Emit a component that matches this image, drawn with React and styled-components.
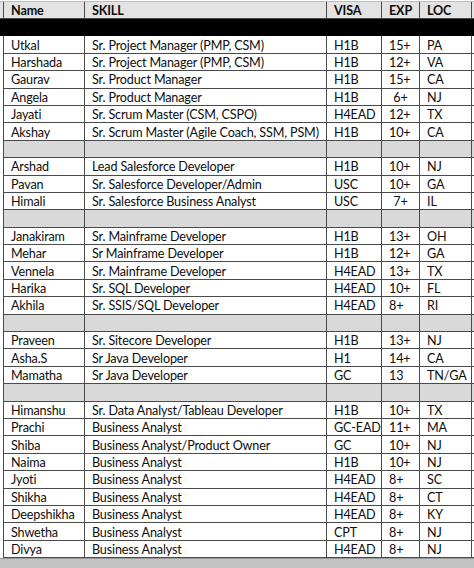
import styled, { createGlobalStyle } from 'styled-components';

const GlobalStyle = createGlobalStyle`
  html, body {
    margin: 0;
    padding: 0;
    background: #fff;
  }
  * {
    box-sizing: border-box;
  }
`;

const LINE = '#4a4a4a';
const COLS = '81px 242px 55px 38px 53px';

const Sheet = styled.div`
  width: 474px;
  height: 568px;
  padding-top: 1px;
  display: flex;
  flex-direction: column;
  font-family: Lato, 'Liberation Sans', sans-serif;
  font-size: 12.6px;
  letter-spacing: -0.15px;
  color: #0d0d0d;
  background: #fff;
  overflow: hidden;
`;

const HeaderBand = styled.div`
  background: #e3e3e3;
  border-top: 1px solid #bdbdbd;
  border-bottom: 1px solid ${LINE};
  padding-left: 3px;
`;

const Row = styled.div`
  display: grid;
  grid-template-columns: ${COLS};
  height: ${(p) => p.$h || 17.4}px;
  margin-left: ${(p) => (p.$bleed ? 0 : 3)}px;
  border-bottom: ${(p) => (p.$open ? 'none' : `1px solid ${LINE}`)};
  background: ${(p) => p.$bg || 'transparent'};
`;

const Cell = styled.div`
  display: flex;
  align-items: center;
  justify-content: ${(p) => (p.$center ? 'center' : 'flex-start')};
  padding: 1px ${(p) => (p.$center ? 0 : 2)}px 0 ${(p) => (p.$center ? 0 : 7)}px;
  border-left: 1px solid ${LINE};
  white-space: nowrap;
  overflow: hidden;
  font-weight: ${(p) => (p.$bold ? 700 : 400)};
  &:last-child {
    border-right: 1px solid ${LINE};
  }
`;

const BlackBand = styled.div`
  height: 17px;
  background: #000;
`;

const BottomBand = styled.div`
  flex: 1;
  background: #c2c2c2;
  border-top: 1px solid #9a9a9a;
`;

const groups = [
  [
    ['Utkal', 'Sr. Project Manager (PMP, CSM)', 'H1B', '15+', 'PA'],
    ['Harshada', 'Sr. Project Manager (PMP, CSM)', 'H1B', '12+', 'VA'],
    ['Gaurav', 'Sr. Product Manager', 'H1B', '15+', 'CA'],
    ['Angela', 'Sr. Product Manager', 'H1B', '6+', 'NJ', true],
    ['Jayati', 'Sr. Scrum Master (CSM, CSPO)', 'H4EAD', '12+', 'TX'],
    ['Akshay', 'Sr. Scrum Master (Agile Coach, SSM, PSM)', 'H1B', '10+', 'CA'],
  ],
  [
    ['Arshad', 'Lead Salesforce Developer', 'H1B', '10+', 'NJ'],
    ['Pavan', 'Sr. Salesforce Developer/Admin', 'USC', '10+', 'GA'],
    ['Himali', 'Sr. Salesforce Business Analyst', 'USC', '7+', 'IL', true],
  ],
  [
    ['Janakiram', 'Sr. Mainframe Developer', 'H1B', '13+', 'OH'],
    ['Mehar', 'Sr Mainframe Developer', 'H1B', '12+', 'GA'],
    ['Vennela', 'Sr. Mainframe Developer', 'H4EAD', '13+', 'TX'],
    ['Harika', 'Sr. SQL Developer', 'H4EAD', '10+', 'FL'],
    ['Akhila', 'Sr. SSIS/SQL Developer', 'H4EAD', '8+', 'RI'],
  ],
  [
    ['Praveen', 'Sr. Sitecore Developer', 'H1B', '13+', 'NJ'],
    ['Asha.S', 'Sr Java Developer', 'H1', '14+', 'CA'],
    ['Mamatha', 'Sr Java Developer', 'GC', '13', 'TN/GA'],
  ],
  [
    ['Himanshu', 'Sr. Data Analyst/Tableau Developer', 'H1B', '10+', 'TX'],
    ['Prachi', 'Business Analyst', 'GC-EAD', '11+', 'MA'],
    ['Shiba', 'Business Analyst/Product Owner', 'GC', '10+', 'NJ'],
    ['Naima', 'Business Analyst', 'H1B', '10+', 'NJ'],
    ['Jyoti', 'Business Analyst', 'H4EAD', '8+', 'SC'],
    ['Shikha', 'Business Analyst', 'H4EAD', '8+', 'CT'],
    ['Deepshikha', 'Business Analyst', 'H4EAD', '8+', 'KY'],
    ['Shwetha', 'Business Analyst', 'CPT', '8+', 'NJ'],
    ['Divya', 'Business Analyst', 'H4EAD', '8+', 'NJ'],
  ],
];

const Candidate = ({ row }) => {
  const [name, skill, visa, exp, loc, centerExp] = row;
  return (
    <Row>
      <Cell>{name}</Cell>
      <Cell>{skill}</Cell>
      <Cell>{visa}</Cell>
      <Cell $center={centerExp}>{exp}</Cell>
      <Cell>{loc}</Cell>
    </Row>
  );
};

const Spacer = () => (
  <Row $bg="#d9d9d9">
    <Cell />
    <Cell />
    <Cell />
    <Cell />
    <Cell />
  </Row>
);

const App = () => (
  <>
    <GlobalStyle />
    <Sheet>
      <HeaderBand>
        <Row $bleed $open $h={16.4}>
          <Cell $bold>Name</Cell>
          <Cell $bold>SKILL</Cell>
          <Cell $bold>VISA</Cell>
          <Cell $bold>EXP</Cell>
          <Cell $bold>LOC</Cell>
        </Row>
      </HeaderBand>
      <BlackBand />
      {groups.map((group, gi) => (
        <div key={gi}>
          {gi > 0 && <Spacer />}
          {group.map((row) => (
            <Candidate key={row[0]} row={row} />
          ))}
        </div>
      ))}
      <BottomBand />
    </Sheet>
  </>
);

export default App;
